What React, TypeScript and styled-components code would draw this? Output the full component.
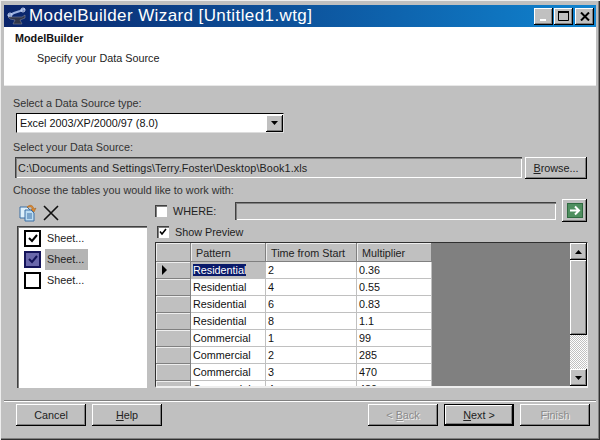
import React from 'react';
import styled, { createGlobalStyle } from 'styled-components';

const GlobalStyle = createGlobalStyle`
  html, body { margin: 0; padding: 0; background: #c0c0c0; }
  * { box-sizing: border-box; }
`;

const raised = `
  background: #c0c0c0;
  box-shadow: inset -1px -1px 0 #000, inset 1px 1px 0 #fff, inset -2px -2px 0 #808080;
`;

const sunken = `
  box-shadow: inset 1px 1px 0 #404040, inset 2px 2px 0 #808080, inset -1px -1px 0 #fff;
`;

const Window = styled.div`
  width: 600px;
  height: 440px;
  padding: 5px 4px 0;
  background: #c0c0c0;
  font-family: "Liberation Sans", Arial, sans-serif;
  font-size: 10.8px;
  color: #222;
  overflow: hidden;
  display: flex;
  flex-direction: column;
  box-shadow: inset 0 1px 0 #eee, inset 1px 0 0 #eee, inset -1px -1px 0 #303030, inset -2px -2px 0 #808080;
`;

const TitleBar = styled.div`
  height: 22px;
  flex: none;
  display: flex;
  align-items: center;
  padding: 0 2px 0 3px;
  background: linear-gradient(90deg, #0a246a, #1084d0);
`;

const TitleText = styled.div`
  font-family: "Liberation Sans", Arial, sans-serif;
  font-size: 17px;
  letter-spacing: 0.4px;
  color: #fff;
  margin-left: 2px;
  white-space: nowrap;
  flex: 1;
`;

const CaptionButton = styled.button`
  ${raised}
  width: 19px;
  height: 17px;
  padding: 0;
  border: 0;
  margin-left: 1px;
  display: flex;
  align-items: center;
  justify-content: center;
  &:last-child { margin-left: 2px; }
`;

const Header = styled.div`
  height: 59px;
  flex: none;
  background: #fff;
  padding: 4px 11px;
  border-bottom: 1px solid #e8e8e8;
`;

const HeaderTitle = styled.div`
  font-weight: bold;
  color: #111;
  line-height: 14px;
`;

const HeaderSub = styled.div`
  margin: 6px 0 0 22px;
  line-height: 14px;
`;

const Content = styled.div`
  flex: 1;
  padding: 10px 9px 0 9px;
  display: flex;
  flex-direction: column;
  min-height: 0;
`;

const Label = styled.div`
  line-height: 14px;
  color: #333;
`;

const Combo = styled.div`
  width: 268px;
  height: 20px;
  margin: 3px 0 7px 3px;
  background: #fff;
  border: 1px solid #000;
  border-right-color: #ddd;
  border-bottom-color: #ddd;
  display: flex;
  align-items: center;
  justify-content: space-between;
  padding-left: 3px;
  color: #111;
`;

const ComboArrow = styled.div`
  ${raised}
  width: 17px;
  height: 17px;
  display: flex;
  align-items: center;
  justify-content: center;
`;

const PathRow = styled.div`
  display: flex;
  gap: 3px;
  margin: 3px 0 4px 2px;
`;

const PathInput = styled.div`
  ${sunken}
  width: 507px;
  height: 21px;
  padding: 4px 3px;
  line-height: 14px;
  letter-spacing: 0.1px;
  white-space: nowrap;
`;

const PushButton = styled.button<{ $w?: number; $default?: boolean; $disabled?: boolean }>`
  ${raised}
  width: ${(p) => p.$w ?? 70}px;
  height: 22px;
  padding: 0;
  border: ${(p) => (p.$default ? '1px solid #000' : '0')};
  font: inherit;
  color: ${(p) => (p.$disabled ? '#8a8a8a' : '#222')};
  text-shadow: ${(p) => (p.$disabled ? '1px 1px 0 #f0f0f0' : 'none')};
  u { text-underline-offset: 1px; }
`;

const Workspace = styled.div`
  display: flex;
  margin-top: 2px;
  gap: 8px;
  flex: 1;
  min-height: 0;
`;

const LeftPane = styled.div`
  width: 130px;
  margin-left: 4px;
  padding-top: 4px;
  flex: none;
  display: flex;
  flex-direction: column;
`;

const IconRow = styled.div`
  height: 20px;
  display: flex;
  align-items: center;
  gap: 5px;
  padding-left: 2px;
  margin-bottom: 3px;
`;

const SheetList = styled.div`
  ${sunken}
  height: 162px;
  background: #fff;
  padding: 2px 0 0 7px;
`;

const SheetRow = styled.div`
  height: 21px;
  display: flex;
  align-items: center;
  gap: 5px;
`;

const SheetBox = styled.div<{ $active?: boolean }>`
  width: 17px;
  height: 17px;
  border: 2px solid ${(p) => (p.$active ? '#14145a' : '#000')};
  background: ${(p) => (p.$active ? '#6a68ac' : '#fff')};
  display: flex;
  align-items: center;
  justify-content: center;
`;

const SheetName = styled.div<{ $active?: boolean }>`
  width: 43px;
  height: 21px;
  line-height: 21px;
  padding-left: 2px;
  margin-left: -1px;
  background: ${(p) => (p.$active ? '#b4b4b4' : 'transparent')};
`;

const RightPane = styled.div`
  flex: 1;
  display: flex;
  flex-direction: column;
  min-width: 0;
`;

const WhereRow = styled.div`
  height: 23px;
  margin-bottom: 2px;
  display: flex;
  align-items: center;
`;

const SmallBox = styled.div<{ $checked?: boolean }>`
  ${sunken}
  width: 12px;
  height: 12px;
  background: #fff;
  flex: none;
  display: flex;
  align-items: center;
  justify-content: center;
`;

const WhereLabel = styled.span`
  margin-left: 6px;
  width: 62px;
  flex: none;
`;

const WhereInput = styled.div`
  ${sunken}
  width: 324px;
  height: 18px;
`;

const GoButton = styled.button`
  ${raised}
  width: 25px;
  height: 23px;
  margin-left: 6px;
  padding: 0;
  border: 0;
  display: flex;
  align-items: center;
  justify-content: center;
`;

const PreviewRow = styled.div`
  height: 15px;
  margin: 0 0 3px 2px;
  display: flex;
  align-items: center;
`;

const PreviewLabel = styled.span`
  margin-left: 6px;
`;

const GridFrame = styled.div`
  width: 433px;
  height: 146px;
  display: flex;
  background: #808080;
  border-top: 1px solid #303030;
  border-left: 1px solid #303030;
  border-right: 1px solid #eee;
  border-bottom: 2px solid #eee;
  overflow: hidden;
`;

const Table = styled.div`
  width: 276px;
  flex: none;
  display: grid;
  grid-template-columns: 35px 75px 91px 75px;
  grid-template-rows: 19px;
  grid-auto-rows: 17px;
  align-content: start;
`;

const HeadCell = styled.div`
  background: #c0c0c0;
  padding: 3px 0 0 5px;
  line-height: 14px;
  border-right: 1px solid #808080;
  border-bottom: 1px solid #808080;
  box-shadow: inset 1px 1px 0 #eee;
  white-space: nowrap;
  overflow: hidden;
`;

const RowHead = styled.div`
  background: #c0c0c0;
  border-right: 1px solid #808080;
  border-bottom: 1px solid #808080;
  box-shadow: inset 1px 1px 0 #eee;
  display: flex;
  align-items: center;
  padding-left: 6px;
`;

const Cell = styled.div<{ $selected?: boolean }>`
  background: ${(p) => (p.$selected ? '#c0c0c0' : '#fff')};
  border-right: 1px solid #c0c0c0;
  border-bottom: 1px solid #c0c0c0;
  line-height: 17px;
  padding-left: 2px;
  white-space: nowrap;
  overflow: hidden;
  color: #111;
`;

const Selected = styled.span`
  background: #0a1a6a;
  color: #fff;
`;

const GridFill = styled.div`
  flex: 1;
  background: #808080;
`;

const ScrollBar = styled.div`
  width: 17px;
  flex: none;
  display: flex;
  flex-direction: column;
  background-color: #fff;
  background-image: repeating-conic-gradient(#c0c0c0 0 25%, #fff 0 50%);
  background-size: 2px 2px;
`;

const ScrollButton = styled.div`
  ${raised}
  height: 17px;
  flex: none;
  display: flex;
  align-items: center;
  justify-content: center;
`;

const ScrollThumb = styled.div`
  ${raised}
  height: 75px;
  flex: none;
`;

const ScrollTrack = styled.div`
  flex: 1;
`;

const Footer = styled.div`
  flex: none;
  height: 37px;
  margin-bottom: 3px;
  border-top: 1px solid #808080;
  box-shadow: inset 0 1px 0 #fff;
  padding: 3px 6px 0 12px;
  display: flex;
  gap: 6px;
`;

const Spacer = styled.div`
  flex: 1;
`;

const Tick = ({ color = '#000' }: { color?: string }) => (
  <svg width="10" height="9" viewBox="0 0 10 9">
    <path d="M1 4 L4 7 L9 1" fill="none" stroke={color} strokeWidth="2" />
  </svg>
);

const AppIcon = () => (
  <svg width="20" height="18" viewBox="0 0 20 18">
    <path d="M1 9 L7 6 L13 4 L18 2" stroke="#9ab0e0" strokeWidth="2" fill="none" />
    <circle cx="3" cy="8" r="2" fill="none" stroke="#c8d4f0" />
    <circle cx="16" cy="3" r="2" fill="none" stroke="#c8d4f0" />
    <path d="M1 10 H15 L18 8 V11 L13 13 L15 17 H6 L8 13 L3 12 Z" fill="#30364a" stroke="#8a93ab" strokeWidth="0.5" />
  </svg>
);

const CopyIcon = () => (
  <svg width="18" height="18" viewBox="0 0 18 18">
    <path d="M1 3 H8 L11 6 V14 H1 Z" fill="#dff0fa" stroke="#3a6ea5" />
    <path d="M6 6 H12 L15 9 V17 H6 Z" fill="#bcdcf2" stroke="#3a6ea5" />
    <path d="M8 10 H13 M8 12 H13 M8 14 H13" stroke="#3a6ea5" />
    <path d="M8 3 C11 0 14 1 15 5 L17 4 L15 8 L12 5 L13.5 5 C13 3 11 2 9 3.5 Z" fill="#e08a30" stroke="#9a5a18" strokeWidth="0.5" />
  </svg>
);

const DeleteIcon = () => (
  <svg width="18" height="18" viewBox="0 0 18 18">
    <path d="M2 2 L16 16 M16 2 L2 16" stroke="#111" strokeWidth="1.6" />
  </svg>
);

const GoIcon = () => (
  <svg width="16" height="15" viewBox="0 0 16 15">
    <rect x="0.5" y="0.5" width="15" height="14" fill="#4f8f5f" stroke="#2f6a40" />
    <path d="M3 7.5 H11 M8 3.5 L12 7.5 L8 11.5" fill="none" stroke="#fff" strokeWidth="2" />
  </svg>
);

const Arrow = ({ dir }: { dir: 'up' | 'down' | 'right' }) => {
  const d = { up: 'M0 4 L3.5 0 L7 4 Z', down: 'M0 0 H7 L3.5 4 Z', right: 'M0 0 L5 5 L0 10 Z' }[dir];
  return dir === 'right' ? (
    <svg width="5" height="10" viewBox="0 0 5 10"><path d={d} fill="#000" /></svg>
  ) : (
    <svg width="7" height="4" viewBox="0 0 7 4"><path d={d} fill="#000" /></svg>
  );
};

const rows: [string, string, string][] = [
  ['Residential', '2', '0.36'],
  ['Residential', '4', '0.55'],
  ['Residential', '6', '0.83'],
  ['Residential', '8', '1.1'],
  ['Commercial', '1', '99'],
  ['Commercial', '2', '285'],
  ['Commercial', '3', '470'],
  ['Commercial', '4', '480'],
];

export default function App() {
  return (
    <Window>
      <GlobalStyle />
      <TitleBar>
        <AppIcon />
        <TitleText>ModelBuilder Wizard [Untitled1.wtg]</TitleText>
        <CaptionButton>
          <svg width="9" height="9" viewBox="0 0 9 9"><path d="M1 8 H7" stroke="#fff" strokeWidth="2" /></svg>
        </CaptionButton>
        <CaptionButton>
          <svg width="11" height="10" viewBox="0 0 11 10"><path d="M0.5 1 H10.5 V9.5 H0.5 Z" fill="none" stroke="#000" /><path d="M0 1 H11" stroke="#000" strokeWidth="2" /></svg>
        </CaptionButton>
        <CaptionButton>
          <svg width="10" height="9" viewBox="0 0 10 9"><path d="M1 0.5 L9 8.5 M9 0.5 L1 8.5" stroke="#000" strokeWidth="2" /></svg>
        </CaptionButton>
      </TitleBar>
      <Header>
        <HeaderTitle>ModelBuilder</HeaderTitle>
        <HeaderSub>Specify your Data Source</HeaderSub>
      </Header>
      <Content>
        <Label>Select a Data Source type:</Label>
        <Combo>
          Excel 2003/XP/2000/97 (8.0)
          <ComboArrow><Arrow dir="down" /></ComboArrow>
        </Combo>
        <Label>Select your Data Source:</Label>
        <PathRow>
          <PathInput>C:\Documents and Settings\Terry.Foster\Desktop\Book1.xls</PathInput>
          <PushButton $w={62}><u>B</u>rowse...</PushButton>
        </PathRow>
        <Label>Choose the tables you would like to work with:</Label>
        <Workspace>
          <LeftPane>
            <IconRow>
              <CopyIcon />
              <DeleteIcon />
            </IconRow>
            <SheetList>
              <SheetRow>
                <SheetBox><Tick /></SheetBox>
                <SheetName>Sheet...</SheetName>
              </SheetRow>
              <SheetRow>
                <SheetBox $active><Tick color="#14145a" /></SheetBox>
                <SheetName $active>Sheet...</SheetName>
              </SheetRow>
              <SheetRow>
                <SheetBox />
                <SheetName>Sheet...</SheetName>
              </SheetRow>
            </SheetList>
          </LeftPane>
          <RightPane>
            <WhereRow>
              <SmallBox />
              <WhereLabel>WHERE:</WhereLabel>
              <WhereInput />
              <GoButton><GoIcon /></GoButton>
            </WhereRow>
            <PreviewRow>
              <SmallBox $checked>
                <svg width="8" height="8" viewBox="0 0 8 8"><path d="M1 3.5 L3 6 L7 1" fill="none" stroke="#000" strokeWidth="1.6" /></svg>
              </SmallBox>
              <PreviewLabel>Show Preview</PreviewLabel>
            </PreviewRow>
            <GridFrame>
              <Table>
                <HeadCell />
                <HeadCell>Pattern</HeadCell>
                <HeadCell>Time from Start</HeadCell>
                <HeadCell>Multiplier</HeadCell>
                {rows.map((r, i) => (
                  <React.Fragment key={i}>
                    <RowHead>{i === 0 && <Arrow dir="right" />}</RowHead>
                    <Cell $selected={i === 0}>{i === 0 ? <Selected>{r[0]}</Selected> : r[0]}</Cell>
                    <Cell>{r[1]}</Cell>
                    <Cell>{r[2]}</Cell>
                  </React.Fragment>
                ))}
              </Table>
              <GridFill />
              <ScrollBar>
                <ScrollButton><Arrow dir="up" /></ScrollButton>
                <ScrollThumb />
                <ScrollTrack />
                <ScrollButton><Arrow dir="down" /></ScrollButton>
              </ScrollBar>
            </GridFrame>
          </RightPane>
        </Workspace>
      </Content>
      <Footer>
        <PushButton>Cancel</PushButton>
        <PushButton><u>H</u>elp</PushButton>
        <Spacer />
        <PushButton $disabled>&lt; <u>B</u>ack</PushButton>
        <PushButton $default><u>N</u>ext &gt;</PushButton>
        <PushButton $disabled>Finish</PushButton>
      </Footer>
    </Window>
  );
}
